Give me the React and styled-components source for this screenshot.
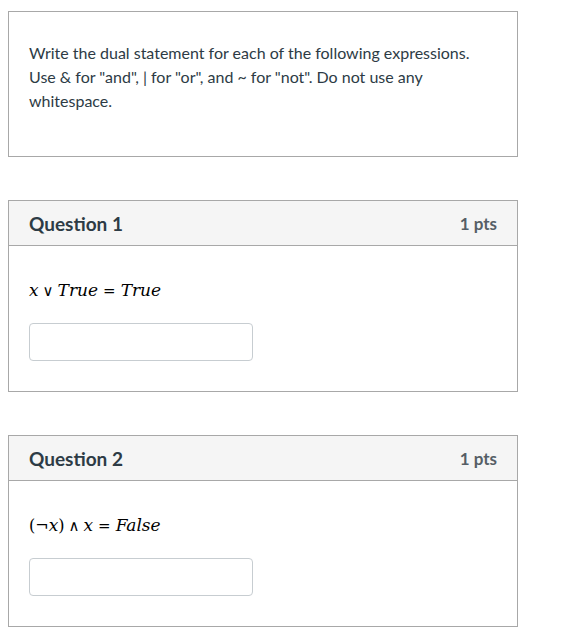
import React from "react";
import styled, { createGlobalStyle } from "styled-components";

const Global = createGlobalStyle`
  body {
    margin: 8px;
    background: #fff;
    font-family: Lato, "Open Sans", sans-serif;
    color: #2d3b45;
  }
`;

const Page = styled.div`
  width: 510px;
  padding-top: 3px;
  display: flex;
  flex-direction: column;
  gap: 43px;
`;

const Box = styled.div`
  border: 1px solid #a8a8a8;
  background: #fff;
`;

const Intro = styled.div`
  padding: 29px 20px 43px;
  font-size: 16px;
  line-height: 24px;
`;

const Header = styled.div`
  display: flex;
  align-items: center;
  justify-content: space-between;
  height: 44px;
  padding: 0 20px;
  background: #f5f5f5;
  border-bottom: 1px solid #a8a8a8;
`;

const Title = styled.h2`
  margin: 0;
  font-size: 19px;
  font-weight: 700;
  color: #2d3b45;
`;

const Points = styled.span`
  font-size: 17px;
  font-weight: 700;
  color: #555e66;
`;

const Body = styled.div`
  padding: 32px 20px 30px;
  display: flex;
  flex-direction: column;
  align-items: flex-start;
  gap: 21px;
`;

const Math = styled.div`
  height: 24px;
  font-family: "DejaVu Serif", "Liberation Serif", serif;
  font-size: 17px;
  line-height: 24px;
  color: #000;
  white-space: nowrap;
`;

const V = styled.i`
  font-style: italic;
  line-height: 1;
`;

const Op = styled.span`
  font-size: 15px;
  line-height: 1;
  margin: 0 ${(p) => p.$gap || 4}px;
`;

const Paren = styled.span`
  font-size: 16px;
  line-height: 1;
`;

const Input = styled.input`
  box-sizing: border-box;
  width: 224px;
  height: 38px;
  margin: 0;
  border: 1px solid #c7cdd1;
  border-radius: 4px;
  background: #fff;
  font-size: 15px;
  padding: 0 8px;
`;

function Question({ n, children }) {
  return (
    <Box>
      <Header>
        <Title>Question {n}</Title>
        <Points>1 pts</Points>
      </Header>
      <Body>
        <Math>{children}</Math>
        <Input type="text" aria-label={`Answer for question ${n}`} />
      </Body>
    </Box>
  );
}

export default function App() {
  return (
    <>
      <Global />
      <Page>
        <Box>
          <Intro>
            Write the dual statement for each of the following expressions.
            <br />
            Use &amp; for "and", | for "or", and ~ for "not". Do not use any
            <br />
            whitespace.
          </Intro>
        </Box>
        <Question n={1}>
          <V>x</V>
          <Op>∨</Op>
          <V>True</V>
          <Op $gap={5}>=</Op>
          <V>True</V>
        </Question>
        <Question n={2}>
          <Paren>(¬</Paren>
          <V>x</V>
          <Paren>)</Paren>
          <Op>∧</Op>
          <V>x</V>
          <Op $gap={5}>=</Op>
          <V>False</V>
        </Question>
      </Page>
    </>
  );
}
